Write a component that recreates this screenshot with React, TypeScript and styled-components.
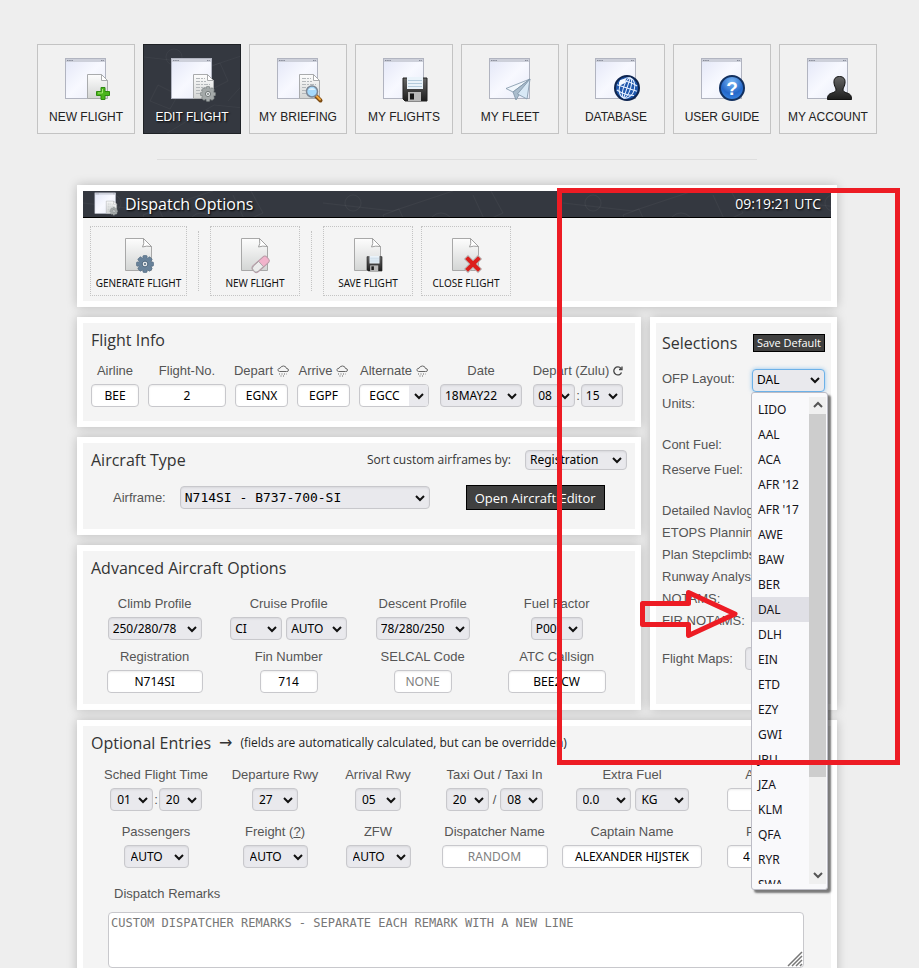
import React, { useId, useState } from "react";
import styled, { createGlobalStyle, css } from "styled-components";

const UI = `"Noto Sans", "Open Sans", sans-serif`;
const HEAD = `"Open Sans", "Noto Sans", sans-serif`;
const LABEL = `"Liberation Sans", Arial, sans-serif`;
const MONO = `"DejaVu Sans Mono", monospace`;
const RED = "#ed1c24";

const sketch = encodeURIComponent(
  `<svg xmlns="http://www.w3.org/2000/svg" width="240" height="90" fill="none" stroke="#fff" stroke-opacity=".04"><path d="M0 12l70 8 60-20M20 90l50-30 80 8 90-36M150 4l12 26 18-8-12-22M200 50l20 14-12 16-20-14zM60 24l16-6 8 18-16 8zM100 74h60M120 66v18M14 40l20 10-8 14-20-8z"/><circle cx="118" cy="34" r="12"/><circle cx="118" cy="34" r="7"/><circle cx="30" cy="12" r="8"/><path d="M176 84l24-40 30 40M84 56l20-22"/></svg>`
);
const darkSurface = css`
  background: #343840 url("data:image/svg+xml,${sketch}");
`;

const GlobalStyle = createGlobalStyle`
  * { box-sizing: border-box; }
  body { margin: 0; background: #eeeeee; color: #333; font-family: ${LABEL}; }
  button, input, select, textarea { margin: 0; font: inherit; color: inherit; }
  svg { display: block; flex: none; }
`;

/* ---------- page frame ---------- */

const Page = styled.div`
  padding: 44px 5px 0 0;
`;

const Nav = styled.nav`
  display: flex;
  flex-wrap: wrap;
  justify-content: center;
  gap: 8px;
`;

const NavLink = styled.a<{ $active?: boolean }>`
  display: flex;
  flex-direction: column;
  align-items: center;
  gap: 4px;
  width: 98px;
  height: 90px;
  padding-top: 12px;
  border: 1px solid #c3c3c3;
  background: #f1f1f1;
  color: #222;
  font-size: 12px;
  line-height: 16px;
  text-decoration: none;
  white-space: nowrap;
  ${(p) =>
    p.$active &&
    css`
      ${darkSurface}
      border-color: #1f2226;
      color: #fff;
      text-shadow: 1px 1px 2px #000;
    `}
`;

const Divider = styled.hr`
  width: 600px;
  max-width: 90%;
  margin: 25px auto;
  border: 0;
  border-top: 1px solid #dedede;
`;

const Board = styled.main`
  position: relative;
  display: flex;
  flex-direction: column;
  gap: 10px;
  max-width: 760px;
  margin: 0 auto;
`;

const Columns = styled.div`
  display: flex;
  gap: 9px;
`;

const MainColumn = styled.div`
  display: flex;
  flex: 1;
  flex-direction: column;
  gap: 10px;
  min-width: 0;
`;

const Panel = styled.section`
  border: 6px solid #fff;
  background: #f4f4f4;
  box-shadow: 0 0 10px rgba(0, 0, 0, 0.22);
`;

const FormPanel = styled(Panel)<{ $bottom: number }>`
  padding: 6px 8px ${(p) => p.$bottom}px;
`;

const SidePanel = styled(Panel)`
  flex: none;
  width: 187px;
  padding: 9px 6px;
`;

const Heading = styled.h2`
  margin: 0;
  color: #333;
  font: 400 16px/22px ${HEAD};
  white-space: nowrap;
`;

const HeadingArrow = styled.span`
  font: 16px/22px "DejaVu Sans", sans-serif;
`;

/* ---------- dispatch bar ---------- */

const TitleBar = styled.header`
  ${darkSurface}
  display: flex;
  align-items: center;
  gap: 6px;
  height: 27px;
  padding: 0 10px 0 9px;
  border-bottom: 1px solid #000;
  color: #fff;
  text-shadow: 1px 1px 2px #000;
`;

const BarTitle = styled.h1`
  flex: 1;
  margin: 0;
  font: 400 16px/24px ${HEAD};
`;

const Clock = styled.time`
  font: 400 14px/24px ${HEAD};
`;

const Toolbar = styled.div`
  display: flex;
  flex-wrap: wrap;
  align-items: center;
  gap: 8px;
  padding: 8px 7px 5px;
`;

const ToolButton = styled.button<{ $wide?: boolean }>`
  display: flex;
  flex-direction: column;
  align-items: center;
  width: ${(p) => (p.$wide ? 97 : 90)}px;
  height: 70px;
  padding: 10px 0 0;
  border: 1px dotted #c4c4c4;
  background: transparent;
  color: #111;
  font: 10px/16px ${UI};
  white-space: nowrap;
`;

const ToolDivider = styled.span`
  width: 4px;
  height: 60px;
  margin-left: 3px;
  border-left: 1px dotted #c4c4c4;
`;

/* ---------- form parts ---------- */

const FieldGrid = styled.div<{ $cols: string; $gap?: number; $roomy?: boolean }>`
  display: grid;
  grid-template-columns: ${(p) => p.$cols};
  column-gap: ${(p) => p.$gap ?? 0}px;
  row-gap: ${(p) => (p.$roomy ? 13 : 9)}px;
  ${(p) => p.$roomy && `select { padding: 0 6px; }`}
`;

const FieldBox = styled.div`
  display: flex;
  flex-direction: column;
  align-items: center;
  gap: 5px;
`;

const Caption = styled.label`
  display: flex;
  align-items: center;
  gap: 4px;
  color: #555;
  font-size: 13px;
  line-height: 16px;
  white-space: nowrap;
`;

const Pair = styled.div<{ $gap: number }>`
  display: flex;
  align-items: center;
  gap: ${(p) => p.$gap}px;
  color: #555;
  font-size: 13px;
  line-height: 16px;
`;

const frame = css`
  height: 23px;
  border: 1px solid #c8c8cc;
  border-radius: 4px;
  box-shadow: inset 0 1px 2px rgba(0, 0, 0, 0.08);
`;

const TextInput = styled.input<{ $w: number; $left?: boolean }>`
  ${frame}
  width: ${(p) => p.$w}px;
  padding: 0 ${(p) => (p.$left ? 15 : 2)}px;
  background: #fff;
  color: #000;
  font: 12px/20px ${UI};
  text-align: ${(p) => (p.$left ? "left" : "center")};
  &::placeholder {
    color: #808080;
    opacity: 1;
  }
`;

const SelectFrame = styled.span<{ $w: number }>`
  display: grid;
  grid-template-columns: 1fr 20px;
  align-items: center;
  width: ${(p) => p.$w}px;
  svg {
    grid-area: 1 / 2;
    justify-self: center;
    pointer-events: none;
  }
`;

const SelectBox = styled.select<{ $mono?: boolean; $focus?: boolean; $short?: boolean }>`
  ${frame}
  grid-area: 1 / 1 / 2 / 3;
  width: 100%;
  height: ${(p) => (p.$short ? 20 : 23)}px;
  padding: 0 4px;
  appearance: none;
  background: #e9e9ed;
  color: #000;
  font: 12px/18px ${UI};
  ${(p) => p.$mono && `font: 13px/20px ${MONO};`}
  ${(p) =>
    p.$focus &&
    css`
      border-color: #6cb1e8;
      box-shadow: 0 0 4px rgba(82, 168, 236, 0.6);
    `}
`;

const ComboFrame = styled.div`
  ${frame}
  display: flex;
  width: 70px;
  overflow: hidden;
  background: #fff;
`;

const ComboInput = styled.input`
  flex: 1;
  min-width: 0;
  padding: 0;
  border: 0;
  background: transparent;
  color: #000;
  font: 12px/20px ${UI};
  text-align: center;
`;

const ComboButton = styled.button`
  display: grid;
  place-items: center;
  width: 19px;
  padding: 0;
  border: 0;
  background: #e9e9ed;
`;

const DarkButton = styled.button<{ $small?: boolean }>`
  height: ${(p) => (p.$small ? 18 : 25)}px;
  padding: 0 ${(p) => (p.$small ? 3 : 8)}px;
  border: 1px solid #000;
  background: #404040;
  color: #fff;
  font: ${(p) => (p.$small ? "11px/14px" : "13px/20px")} ${HEAD};
  white-space: nowrap;
`;

const Row = styled.div<{ $top?: number; $gap?: number; $between?: boolean; $indent?: number }>`
  display: flex;
  align-items: center;
  justify-content: ${(p) => (p.$between ? "space-between" : "flex-start")};
  gap: ${(p) => p.$gap ?? 0}px;
  margin-top: ${(p) => p.$top ?? 0}px;
  padding-left: ${(p) => p.$indent ?? 0}px;
`;

const SortLabel = styled.label`
  margin-left: auto;
  color: #333;
  font: 12px/16px ${HEAD};
`;

const FieldRows = styled.div<{ $top: number }>`
  margin-top: ${(p) => p.$top}px;
`;

const Note = styled.span`
  color: #222;
  font: 12px/16px ${HEAD};
`;

const HelpLink = styled.a`
  color: inherit;
  text-decoration: underline;
`;

const Remarks = styled.textarea`
  display: block;
  grid-area: 1 / 1;
  width: 100%;
  height: 56px;
  padding: 3px 2px;
  border: 1px solid #c8c8cc;
  border-radius: 4px;
  background: #fff;
  font: 12px/15px ${MONO};
  resize: none;
  &::placeholder {
    color: #777;
    opacity: 1;
  }
`;

const RemarksFrame = styled.div`
  display: grid;
  margin: 10px 19px 0 17px;
  svg {
    grid-area: 1 / 1;
    place-self: end;
    margin: 1px;
    pointer-events: none;
  }
`;

/* ---------- selections ---------- */

const OptionGroup = styled.div<{ $row: number; $top: number }>`
  display: grid;
  grid-auto-rows: ${(p) => p.$row}px;
  align-items: center;
  margin-top: ${(p) => p.$top}px;
`;

const OptionRow = styled.div<{ $col: number }>`
  display: grid;
  grid-template-columns: ${(p) => p.$col}px 1fr;
  align-items: center;
`;

const MenuAnchor = styled.div`
  position: relative;
  display: flex;
  padding-top: 3px;
`;

const Menu = styled.div`
  position: absolute;
  z-index: 2;
  top: 26px;
  left: -1px;
  display: flex;
  width: 77px;
  height: 498px;
  padding: 4px 1px 5px 0;
  border: 1px solid #bdbdc6;
  border-radius: 3px;
  background: #f9f9fb;
  box-shadow: 3px 3px 2px rgba(0, 0, 0, 0.5);
`;

const MenuList = styled.ul`
  flex: 1;
  margin: 0;
  padding: 0;
  overflow: hidden;
  list-style: none;
`;

const MenuItem = styled.li<{ $on: boolean }>`
  padding-left: 6px;
  background: ${(p) => (p.$on ? "#e0e0e6" : "transparent")};
  color: #15141a;
  font: 12px/25px ${UI};
  white-space: nowrap;
`;

const Scroller = styled.div`
  display: grid;
  grid-template-rows: 17px 363px 1fr 17px;
  place-items: center;
  width: 17px;
  background: #f0f0f0;
`;

const Thumb = styled.span`
  width: 100%;
  height: 100%;
  background: #cdcdcd;
`;

/* ---------- annotations drawn over the form ---------- */

const MarkBox = styled.div`
  position: absolute;
  z-index: 3;
  top: 3px;
  left: 480px;
  width: 343px;
  height: 577px;
  border: 5px solid ${RED};
  pointer-events: none;
`;

const MarkArrow = styled.svg`
  position: absolute;
  z-index: 3;
  top: 404px;
  left: 562px;
  pointer-events: none;
`;

/* ---------- icons ---------- */

const SharedPaint = () => (
  <svg width="0" height="0" aria-hidden="true">
    <defs>
      <linearGradient id="paneFill" x1="0" y1="0" x2="1" y2="1">
        <stop offset="0" stopColor="#e3e7f7" />
        <stop offset="0.5" stopColor="#f8f9ff" />
        <stop offset="1" stopColor="#e6eaf8" />
      </linearGradient>
      <linearGradient id="sheetFill" x1="0" y1="0" x2="0" y2="1">
        <stop offset="0" stopColor="#fdfdfd" />
        <stop offset="1" stopColor="#d3d5d4" />
      </linearGradient>
      <linearGradient id="metalFill" x1="0" y1="0" x2="0" y2="1">
        <stop offset="0" stopColor="#666" />
        <stop offset="1" stopColor="#1d1d1d" />
      </linearGradient>
      <radialGradient id="blueFill" cx="0.5" cy="0.25" r="0.8">
        <stop offset="0" stopColor="#7db9f5" />
        <stop offset="0.6" stopColor="#2467c9" />
        <stop offset="1" stopColor="#3d8be6" />
      </radialGradient>
    </defs>
  </svg>
);

const Sheet = ({ lines }: { lines?: boolean }) => (
  <g>
    <path d="M23.5 17.5h14l6 6v18h-20z" fill="url(#sheetFill)" stroke="#a9abad" />
    <path d="M37.5 17.5v6h6z" fill="#fff" stroke="#a9abad" />
    {lines && (
      <path d="M26 21.5h9M26 24.5h10M26 27.5h14M26 30.5h14M26 33.5h14M26 36.5h14" stroke="#b4b8bb" strokeDasharray="4 1 2 1" />
    )}
  </g>
);

const Gear = ({ x, y, r, fill, edge }: { x: number; y: number; r: number; fill: string; edge: string }) => (
  <g transform={`translate(${x} ${y})`}>
    {[0, 45, 90, 135].map((a) => (
      <rect key={a} x={-r / 4} y={-r} width={r / 2} height={r * 2} rx="1" fill={fill} stroke={edge} strokeWidth=".6" transform={`rotate(${a})`} />
    ))}
    <circle r={r * 0.74} fill={fill} />
    <circle r={r * 0.34} fill="#e8ebec" stroke={edge} />
    <circle r={r * 0.12} fill={edge} />
  </g>
);

const Floppy = ({ x, y, s }: { x: number; y: number; s: number }) => (
  <g transform={`translate(${x} ${y}) scale(${s / 24})`}>
    <path d="M0 1h24v23H2l-2-2z" fill="url(#metalFill)" stroke="#222" />
    <path d="M4 0h16v12H4z" fill="#eaf3fa" />
    <path d="M5 3.5h14M5 6.5h14M5 9.5h14" stroke="#b4cbdc" />
    <path d="M5 15h13v9H5z" fill="#b9b9b9" />
    <path d="M7 16.5h4v6H7z" fill="#181818" />
  </g>
);

type Badge = "plus" | "gear" | "lens" | "floppy" | "plane" | "globe" | "help" | "person";

const badges: Record<Badge, React.ReactNode> = {
  plus: (
    <g>
      <Sheet />
      <path d="M37 30.5h4v4h4.500v4H41v4h-4v-4h-4.500v-4H37z" fill="#4bb51c" stroke="#2f8a10" />
      <path d="M38.500 32v4h-4.500" fill="none" stroke="#a2e672" />
    </g>
  ),
  gear: (
    <g>
      <Sheet lines />
      <Gear x={38} y={37} r={7.5} fill="#a4a9a9" edge="#6f7575" />
    </g>
  ),
  lens: (
    <g>
      <Sheet lines />
      <path d="M40 39l4.500 4.500" stroke="#7b4a12" strokeWidth="4" strokeLinecap="round" />
      <path d="M40.500 39l3.500 3.500" stroke="#f0a63c" strokeWidth="2" strokeLinecap="round" />
      <circle cx="36" cy="34.500" r="5.500" fill="#a5d9fb" stroke="#7c8795" strokeWidth="1.500" />
      <path d="M32.500 33a4 4 0 0 1 7 0z" fill="#ddf2ff" />
    </g>
  ),
  floppy: <Floppy x={21} y={20} s={24} />,
  plane: (
    <g stroke="#7e93a6" strokeWidth=".8" strokeLinejoin="round">
      <path d="M42 22L18 31.500l7 3.500z" fill="#f1f7fc" />
      <path d="M42 22L25 35l3 8 3-5z" fill="#a9bccc" />
      <path d="M42 22L29.500 37l9.500 5z" fill="#d8e8f5" />
    </g>
  ),
  globe: (
    <g>
      <circle cx="33" cy="31" r="12" fill="#2058ad" stroke="#0e2550" strokeWidth="2" />
      <g fill="none" stroke="#e6f0ff" transform="rotate(18 33 31)">
        <ellipse cx="33" cy="31" rx="3.500" ry="10.500" />
        <ellipse cx="33" cy="31" rx="7.500" ry="10.500" />
        <path d="M33 20.500v21M22.500 31h21M24 26q9-2.500 18 0M24 36q9 2.500 18 0" />
      </g>
      <path d="M25 25q3-4 7-3l-1 4-6 3z" fill="#f3f8ff" />
    </g>
  ),
  help: (
    <g>
      <circle cx="32" cy="31" r="12" fill="url(#blueFill)" stroke="#12305f" strokeWidth="2" />
      <text x="32" y="38" textAnchor="middle" fill="#fff" fontFamily="Liberation Sans" fontWeight="700" fontSize="19">
        ?
      </text>
    </g>
  ),
  person: (
    <path
      d="M33.500 19.500c4 0 6 2.500 5.500 6.500-.3 3-1.500 4.500-2 6 0 2.500 1 3 4 4 3.500 1 4.500 2.500 4.500 6.500h-24c0-4 1-5.500 4.500-6.500 3-1 4-1.500 4-4-.5-1.500-1.700-3-2-6-.5-4 1.500-6.500 5.500-6.500z"
      fill="url(#metalFill)"
      stroke="#111"
    />
  ),
};

const WindowIcon = ({ badge, small }: { badge: Badge; small?: boolean }) => (
  <svg width={small ? 27 : 52} height={small ? 25 : 48} viewBox="-4 0 52 48" aria-hidden="true">
    <rect x="1.500" y="1.500" width="40" height="40" fill="url(#paneFill)" stroke="#b1b4c0" />
    <path d="M2 2h39v3H2z" fill="#cdd0da" />
    <path d="M3 3.500h6M37 3.500h3" stroke="#868a98" strokeDasharray="1.500 .7" />
    {badges[badge]}
  </svg>
);

const fileMarks = {
  gear: <Gear x={25} y={27} r={8.5} fill="#68829a" edge="#4c657c" />,
  eraser: (
    <g transform="rotate(-42 25 27)">
      <rect x="15" y="23" width="19" height="8" rx="3" fill="#f1b3cb" stroke="#b999a6" />
      <path d="M25 23.500h-7q-3 0-3 3.500t3 3.500h7z" fill="#ececec" stroke="#999" strokeWidth=".7" />
    </g>
  ),
  floppy: <Floppy x={18} y={19} s={15} />,
  cross: (
    <g strokeLinecap="square">
      <path d="M21 22l10 10M31 22l-10 10" stroke="#b9b9b9" strokeWidth="6" />
      <path d="M21 22l10 10M31 22l-10 10" stroke="#dc1f1c" strokeWidth="4" />
    </g>
  ),
};

const FileIcon = ({ mark }: { mark: keyof typeof fileMarks }) => (
  <svg width="38" height="38" viewBox="0 0 38 38" aria-hidden="true">
    <path d="M5.500 1.500h18l8 8v24h-26z" fill="url(#sheetFill)" stroke="#a8a8a8" />
    <path d="M23.500 1.500q1 6-1 8.500 4-1.500 9-.5z" fill="#fff" stroke="#a0a0a0" />
    {fileMarks[mark]}
  </svg>
);

const Chevron = ({ up }: { up?: boolean }) => (
  <svg width="10" height="8" viewBox="0 0 10 8" fill="none" stroke={up === undefined ? "#111" : "#555"} strokeWidth="2" aria-hidden="true">
    <path d={up ? "M1 6L5 2 9 6" : "M1 2L5 6 9 2"} />
  </svg>
);

const Weather = () => (
  <svg width="12" height="12" viewBox="0 0 12 12" fill="none" stroke="#666" aria-hidden="true">
    <path d="M2.500 6.500q-2-.5-1.500-2t2-1.200Q4 1 6.500 1T9.500 3.500q2 0 2 1.600t-2 1.400z" />
    <path d="M2 9h8M3.500 11h5" strokeDasharray="1 1.500" />
  </svg>
);

const Reload = () => (
  <svg width="10" height="10" viewBox="0 0 10 10" fill="none" stroke="#444" strokeWidth="1.300" aria-hidden="true">
    <path d="M8.500 6.500A4 4 0 1 1 8 2.500M9 .5v3H6" />
  </svg>
);

const Grip = () => (
  <svg width="16" height="16" viewBox="0 0 16 16" stroke="#777" strokeWidth="1.500" aria-hidden="true">
    <path d="M1 15L15 1M5 15L15 5M9 15l6-6M13 15l2-2" />
  </svg>
);

/* ---------- controls ---------- */

type SelectProps = {
  id?: string;
  w: number;
  value: string;
  label?: string;
  mono?: boolean;
  focus?: boolean;
  short?: boolean;
  options?: string[];
  onPick?: (v: string) => void;
};

const Select = ({ id, w, value, label, mono, focus, short, options, onPick }: SelectProps) => (
  <SelectFrame $w={w}>
    <SelectBox
      id={id}
      aria-label={label}
      $mono={mono}
      $focus={focus}
      $short={short}
      {...(onPick ? { value, onChange: (e: React.ChangeEvent<HTMLSelectElement>) => onPick(e.target.value) } : { defaultValue: value })}
    >
      {(options ?? [value]).map((o) => (
        <option key={o}>{o}</option>
      ))}
    </SelectBox>
    <Chevron />
  </SelectFrame>
);

const Field = ({ caption, children }: { caption: React.ReactNode; children: (id: string) => React.ReactNode }) => {
  const id = useId();
  return (
    <FieldBox>
      <Caption htmlFor={id}>{caption}</Caption>
      {children(id)}
    </FieldBox>
  );
};

const SelectField = ({ caption, w, value }: { caption: React.ReactNode; w: number; value: string }) => (
  <Field caption={caption}>{(id) => <Select id={id} w={w} value={value} />}</Field>
);

const TextField = (p: { caption: React.ReactNode; w: number; value?: string; placeholder?: string; left?: boolean }) => (
  <Field caption={p.caption}>
    {(id) => <TextInput id={id} $w={p.w} $left={p.left} defaultValue={p.value} placeholder={p.placeholder} />}
  </Field>
);

const PairField = (p: {
  caption: React.ReactNode;
  gap: number;
  sep?: string;
  first: [number, string];
  second: [number, string, string];
}) => (
  <Field caption={p.caption}>
    {(id) => (
      <Pair $gap={p.gap}>
        <Select id={id} w={p.first[0]} value={p.first[1]} />
        {p.sep}
        <Select w={p.second[0]} value={p.second[1]} label={p.second[2]} />
      </Pair>
    )}
  </Field>
);

/* ---------- data ---------- */

const navItems: [string, Badge][] = [
  ["NEW FLIGHT", "plus"],
  ["EDIT FLIGHT", "gear"],
  ["MY BRIEFING", "lens"],
  ["MY FLIGHTS", "floppy"],
  ["MY FLEET", "plane"],
  ["DATABASE", "globe"],
  ["USER GUIDE", "help"],
  ["MY ACCOUNT", "person"],
];

const layouts = [
  "LIDO", "AAL", "ACA", "AFR '12", "AFR '17", "AWE", "BAW", "BER", "DAL", "DLH",
  "EIN", "ETD", "EZY", "GWI", "JBU", "JZA", "KLM", "QFA", "RYR", "SWA",
];

export default function App() {
  const [layout, setLayout] = useState("DAL");

  return (
    <>
      <GlobalStyle />
      <Page>
        <Nav>
          {navItems.map(([text, badge]) => (
            <NavLink key={text} href="#" $active={badge === "gear"}>
              <WindowIcon badge={badge} />
              {text}
            </NavLink>
          ))}
        </Nav>
        <Divider />
        <Board>
          <Panel>
            <TitleBar>
              <WindowIcon badge="gear" small />
              <BarTitle>Dispatch Options</BarTitle>
              <Clock>09:19:21 UTC</Clock>
            </TitleBar>
            <Toolbar>
              <ToolButton $wide>
                <FileIcon mark="gear" />
                GENERATE FLIGHT
              </ToolButton>
              <ToolDivider />
              <ToolButton>
                <FileIcon mark="eraser" />
                NEW FLIGHT
              </ToolButton>
              <ToolDivider />
              <ToolButton>
                <FileIcon mark="floppy" />
                SAVE FLIGHT
              </ToolButton>
              <ToolButton>
                <FileIcon mark="cross" />
                CLOSE FLIGHT
              </ToolButton>
            </Toolbar>
          </Panel>

          <Columns>
            <MainColumn>
              <FormPanel as="form" $bottom={14}>
                <Heading>Flight Info</Heading>
                <FieldRows $top={12}>
                  <FieldGrid $cols="48px 78px 53px 53px 70px 86px 90px" $gap={9}>
                    <TextField caption="Airline" w={48} value="BEE" />
                    <TextField caption="Flight-No." w={78} value="2" />
                    <TextField caption={<>Depart <Weather /></>} w={53} value="EGNX" />
                    <TextField caption={<>Arrive <Weather /></>} w={53} value="EGPF" />
                    <Field caption={<>Alternate <Weather /></>}>
                      {(id) => (
                        <ComboFrame>
                          <ComboInput id={id} defaultValue="EGCC" />
                          <ComboButton type="button" aria-label="Alternate list">
                            <Chevron />
                          </ComboButton>
                        </ComboFrame>
                      )}
                    </Field>
                    <SelectField caption="Date" w={82} value="18MAY22" />
                    <PairField caption={<>Depart (Zulu) <Reload /></>} gap={1} sep=":" first={[42, "08"]} second={[42, "15", "Depart minutes"]} />
                  </FieldGrid>
                </FieldRows>
              </FormPanel>

              <FormPanel as="form" $bottom={19}>
                <Row $gap={14}>
                  <Heading>Aircraft Type</Heading>
                  <SortLabel htmlFor="sort">Sort custom airframes by:</SortLabel>
                  <Select id="sort" w={102} value="Registration" short />
                </Row>
                <Row $top={14} $gap={14} $indent={22}>
                  <Caption htmlFor="airframe">Airframe:</Caption>
                  <Select id="airframe" w={250} value="N714SI - B737-700-SI" mono />
                  <Row $indent={22}>
                    <DarkButton type="button">Open Aircraft Editor</DarkButton>
                  </Row>
                </Row>
              </FormPanel>

              <FormPanel as="form" $bottom={11}>
                <Heading>Advanced Aircraft Options</Heading>
                <FieldRows $top={17}>
                  <FieldGrid $cols="19fr 21fr 19fr 21fr">
                    <SelectField caption="Climb Profile" w={94} value="250/280/78" />
                    <PairField caption="Cruise Profile" gap={4} first={[52, "CI"]} second={[61, "AUTO", "Cruise setting"]} />
                    <SelectField caption="Descent Profile" w={94} value="78/280/250" />
                    <SelectField caption="Fuel Factor" w={52} value="P00" />
                    <TextField caption="Registration" w={96} value="N714SI" />
                    <TextField caption="Fin Number" w={58} value="714" />
                    <TextField caption="SELCAL Code" w={58} placeholder="NONE" />
                    <TextField caption="ATC Callsign" w={98} value="BEE2CW" />
                  </FieldGrid>
                </FieldRows>
              </FormPanel>
            </MainColumn>

            <SidePanel as="form">
              <Row $between>
                <Heading>Selections</Heading>
                <DarkButton type="button" $small>
                  Save Default
                </DarkButton>
              </Row>
              <OptionGroup $row={25} $top={12}>
                <OptionRow $col={90}>
                  <Caption htmlFor="ofp">OFP Layout:</Caption>
                  <MenuAnchor>
                    <Select id="ofp" w={73} value={layout} options={layouts} onPick={setLayout} focus />
                    <Menu>
                      <MenuList role="listbox" aria-label="OFP Layout">
                        {layouts.map((l) => (
                          <MenuItem key={l} role="option" aria-selected={l === layout} $on={l === layout} onClick={() => setLayout(l)}>
                            {l}
                          </MenuItem>
                        ))}
                      </MenuList>
                      <Scroller aria-hidden="true">
                        <Chevron up />
                        <Thumb />
                        <span />
                        <Chevron up={false} />
                      </Scroller>
                    </Menu>
                  </MenuAnchor>
                </OptionRow>
                <Caption as="span">Units:</Caption>
              </OptionGroup>
              <OptionGroup $row={25} $top={16}>
                <Caption as="span">Cont Fuel:</Caption>
                <Caption as="span">Reserve Fuel:</Caption>
              </OptionGroup>
              <OptionGroup $row={22} $top={18}>
                <Caption as="span">Detailed Navlog</Caption>
                <Caption as="span">ETOPS Planning:</Caption>
                <Caption as="span">Plan Stepclimbs:</Caption>
                <Caption as="span">Runway Analysis:</Caption>
                <Caption as="span">NOTAMS:</Caption>
                <Caption as="span">FIR NOTAMS:</Caption>
              </OptionGroup>
              <OptionGroup $row={25} $top={14}>
                <OptionRow $col={83}>
                  <Caption htmlFor="maps">Flight Maps:</Caption>
                  <Select id="maps" w={80} value="" />
                </OptionRow>
              </OptionGroup>
            </SidePanel>
          </Columns>

          <FormPanel as="form" $bottom={18}>
            <Row $gap={8}>
              <Heading>Optional Entries</Heading>
              <HeadingArrow>→</HeadingArrow>
              <Note>(fields are automatically calculated, but can be overridden)</Note>
            </Row>
            <FieldRows $top={13}>
              <FieldGrid $cols="130px 88px 98px 115px 140px 110px" $gap={10} $roomy>
                <PairField caption="Sched Flight Time" gap={1} sep=":" first={[43, "01"]} second={[43, "20", "Flight minutes"]} />
                <SelectField caption="Departure Rwy" w={46} value="27" />
                <SelectField caption="Arrival Rwy" w={46} value="05" />
                <PairField caption="Taxi Out / Taxi In" gap={4} sep="/" first={[43, "20"]} second={[43, "08", "Taxi in"]} />
                <PairField caption="Extra Fuel" gap={4} first={[55, "0.0"]} second={[54, "KG", "Fuel unit"]} />
                <TextField caption="Altitude" w={80} placeholder="AUTO" />
                <SelectField caption="Passengers" w={65} value="AUTO" />
                <SelectField caption={<span>Freight (<HelpLink href="#">?</HelpLink>)</span>} w={65} value="AUTO" />
                <SelectField caption="ZFW" w={65} value="AUTO" />
                <TextField caption="Dispatcher Name" w={106} placeholder="RANDOM" />
                <TextField caption="Captain Name" w={140} value="ALEXANDER HIJSTEK" />
                <TextField caption="Pilot ID" w={80} value="4" left />
              </FieldGrid>
            </FieldRows>
            <Row $top={18} $indent={23}>
              <Caption htmlFor="remarks">Dispatch Remarks</Caption>
            </Row>
            <RemarksFrame>
              <Remarks id="remarks" placeholder="CUSTOM DISPATCHER REMARKS - SEPARATE EACH REMARK WITH A NEW LINE" />
              <Grip />
            </RemarksFrame>
          </FormPanel>

          <MarkBox />
          <MarkArrow width="102" height="50" viewBox="0 0 102 50" fill="none" stroke={RED} strokeWidth="5" strokeLinejoin="round" aria-hidden="true">
            <path d="M3.500 14.500h46v-11L96 25 49.500 46.500v-11h-46z" />
          </MarkArrow>
        </Board>
      </Page>
      <SharedPaint />
    </>
  );
}
